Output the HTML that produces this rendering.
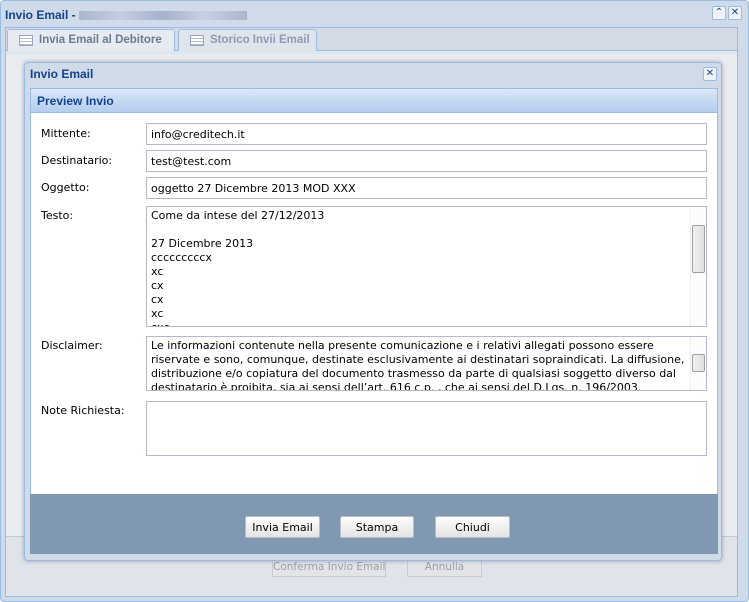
<!DOCTYPE html>
<html><head><meta charset="utf-8"><style>
*{box-sizing:border-box;margin:0;padding:0}
body{width:749px;height:602px;background:#fff;font-family:"DejaVu Sans","Liberation Sans",sans-serif;font-size:11px;color:#000;position:relative;overflow:hidden}
.abs{position:absolute;white-space:nowrap}
.outer{left:0;top:0;width:749px;height:602px;background:#cfdbe8;border:1px solid #99bbe8;border-radius:4px}
.ttl{font-weight:bold;color:#15428b;font-size:12px;font-family:"Liberation Sans",sans-serif}
.tool{width:14px;height:14px;border:1px solid #99bbe8;background:#eef3fa;border-radius:2px;color:#15428b;font-size:10px;line-height:12px;text-align:center}
.tab{height:22px;border:1px solid #99bbe8;border-bottom:none;border-radius:3px 3px 0 0;background:#dfe5ec;color:#909ab0;font-weight:bold;font-family:"Liberation Sans",sans-serif;font-size:11.5px;padding:4px 0 0 31px}
.tab.on{background:#e6ebf2;color:#6b7a90}
.ico{position:absolute;left:11px;top:5px;width:14px;height:11px;border:1px solid #9aa6b8;background:repeating-linear-gradient(#fff 0 2px,#b4bdcc 2px 3px)}
.inner{left:24px;top:62px;width:698px;height:499px;background:#cfdbe8;border:1px solid #99bbe8;border-radius:4px;box-shadow:0 0 4px rgba(0,0,0,.3)}
.phead{left:30px;top:88px;width:688px;height:25px;background:linear-gradient(#dae7f6,#c7dbf3 45%,#b6cdef);border:1px solid #99bbe8;padding:5px 0 0 6px}
.pbody{left:30px;top:113px;width:688px;height:381px;background:#fff;border-left:1px solid #99bbe8;border-right:1px solid #99bbe8}
.foot{left:30px;top:494px;width:688px;height:60px;background:#8098b2}
.lbl{left:41px}
.inp{left:146px;width:561px;height:22px;border:1px solid #b5b8c8;background:#fff;padding:4px 0 0 4px;overflow:hidden}
.ta{left:146px;width:561px;border:1px solid #b5b8c8;background:#fff;padding:2px 0 0 4px;line-height:14px;overflow:hidden;font-size:11px}
.sb{position:absolute;right:0;top:0;bottom:0;width:16px;background:#fcfcfc;border-left:1px solid #eee}
.thumb{position:absolute;left:1px;width:13px;border:1px solid #a0a0a0;border-radius:2px;background:linear-gradient(90deg,#f0f0f0,#e0e0e0)}
.btn{height:22px;border:1px solid #b8bcc4;border-radius:2px;background:linear-gradient(#fdfdfd,#e4e4e4);text-align:center;padding-top:4px;font-size:11px}
.gbtn{height:21px;border:1px solid #c8ccd2;background:#e2e4e8;color:#9aa0a8;text-align:center;padding-top:4px;font-size:10.5px}
</style></head><body>
<div class="abs outer"></div>
<div class="abs ttl" style="left:5px;top:8px">Invio Email - <span style="display:inline-block;width:168px;height:9px;background:linear-gradient(90deg,#a9b6cf,#c5cee0,#a4b2cc,#c8d1e2,#aab6ce);vertical-align:middle"></span></div>
<div class="abs tool" style="left:712px;top:6px">&#8963;</div>
<div class="abs tool" style="left:728px;top:6px">✕</div>
<div class="abs" style="left:5px;top:27px;width:733px;height:570px;border:1px solid #99bbe8;background:#d4dbe4"></div>
<div class="abs" style="left:6px;top:50px;width:731px;height:4px;background:#dfe6ef;border-top:1px solid #99bbe8"></div>
<div class="abs tab on" style="left:7px;top:29px;width:168px"><span class="ico"></span>Invia Email al Debitore</div>
<div class="abs tab" style="left:178px;top:29px;width:139px"><span class="ico"></span>Storico Invii Email</div>
<div class="abs" style="left:6px;top:54px;width:731px;height:482px;background:#e8ebef"></div>
<div class="abs" style="left:6px;top:536px;width:731px;height:60px;background:#dfe3ea;border-top:1px solid #c0c8d4"></div>
<div class="abs gbtn" style="left:272px;top:556px;width:114px">Conferma Invio Email</div>
<div class="abs gbtn" style="left:407px;top:556px;width:75px">Annulla</div>

<div class="abs inner"></div>
<div class="abs ttl" style="left:30px;top:67px">Invio Email</div>
<div class="abs tool" style="left:703px;top:67px">✕</div>
<div class="abs phead ttl">Preview Invio</div>
<div class="abs pbody"></div>
<div class="abs lbl" style="top:127px">Mittente:</div>
<div class="abs lbl" style="top:154px">Destinatario:</div>
<div class="abs lbl" style="top:181px">Oggetto:</div>
<div class="abs lbl" style="top:209px">Testo:</div>
<div class="abs lbl" style="top:339px">Disclaimer:</div>
<div class="abs lbl" style="top:404px">Note Richiesta:</div>
<div class="abs inp" style="top:123px">info@creditech.it</div>
<div class="abs inp" style="top:150px">test@test.com</div>
<div class="abs inp" style="top:177px">oggetto 27 Dicembre 2013 MOD XXX</div>
<div class="abs ta" style="top:206px;height:121px">Come da intese del 27/12/2013<br><br>27 Dicembre 2013<br>cccccccccx<br>xc<br>cx<br>cx<br>xc<br>cxc
<div class="sb"><div class="thumb" style="top:18px;height:48px"></div></div></div>
<div class="abs ta" style="top:336px;height:55px">Le informazioni contenute nella presente comunicazione e i relativi allegati possono essere<br>riservate e sono, comunque, destinate esclusivamente ai destinatari sopraindicati. La diffusione,<br>distribuzione e/o copiatura del documento trasmesso da parte di qualsiasi soggetto diverso dal<br>destinatario è proibita, sia ai sensi dell’art. 616 c.p. , che ai sensi del D.Lgs. n. 196/2003.
<div class="sb"><div class="thumb" style="top:17px;height:18px"></div></div></div>
<div class="abs ta" style="top:401px;height:55px"></div>
<div class="abs foot"></div>
<div class="abs btn" style="left:245px;top:516px;width:75px">Invia Email</div>
<div class="abs btn" style="left:340px;top:516px;width:74px">Stampa</div>
<div class="abs btn" style="left:435px;top:516px;width:75px">Chiudi</div>
</body></html>
